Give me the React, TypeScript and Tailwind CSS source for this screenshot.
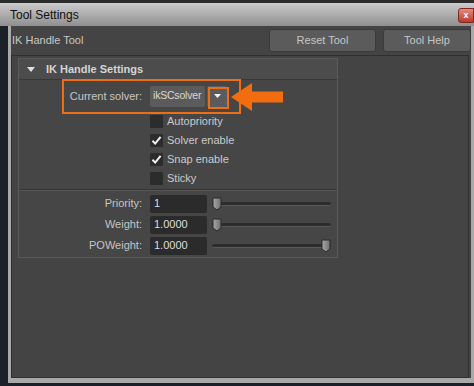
const font = "font-['Liberation_Sans',Arial,sans-serif]";

function CheckRow({ label, checked }: { label: string; checked?: boolean }) {
  return (
    <div className="flex h-[19px] items-center pl-[131px]">
      <div className="flex h-[13px] w-[13px] items-center justify-center rounded-[1px] bg-[#2c2c2c]">
        {checked && (
          <svg width="11" height="11" viewBox="0 0 11 11">
            <path d="M1.5 5.8 L4.2 8.6 L9.6 1.8" fill="none" stroke="#f2f2f2" strokeWidth="2" />
          </svg>
        )}
      </div>
      <span className="ml-[4px] text-[11px] text-[#cacaca]">{label}</span>
    </div>
  );
}

function Thumb() {
  return (
    <svg width="10" height="14" viewBox="0 0 10 14" className="shrink-0">
      <defs>
        <linearGradient id="tg" x1="0" y1="0" x2="1" y2="0">
          <stop offset="0" stopColor="#a8a8a8" />
          <stop offset="1" stopColor="#6e6e6e" />
        </linearGradient>
      </defs>
      <path d="M1 1 H9 V10 L5 13 L1 10 Z" fill="url(#tg)" stroke="#2a2a2a" strokeWidth="1" />
    </svg>
  );
}

function SliderRow({ label, value, pos }: { label: string; value: string; pos: "start" | "end" }) {
  return (
    <div className="flex h-[21px] items-center">
      <span className="w-[123px] text-right text-[11px] text-[#c4c4c4]">{label}</span>
      <div className="ml-[8px] flex h-[18px] w-[57px] items-center rounded-[2px] bg-[#2b2b2b] pl-[4px] text-[11px] text-[#dedede]">
        {value}
      </div>
      <div className="relative ml-[5px] flex h-[18px] w-[119px] items-center">
        <div className="h-[4px] flex-1 rounded-[2px] border-b border-[#5a5a5a] bg-[#2c2c2c]" />
        <div className={`absolute top-[2px] ${pos === "start" ? "left-[0px]" : "right-0"}`}>
          <Thumb />
        </div>
      </div>
    </div>
  );
}

function Panel() {
  return (
    <div className="relative flex w-[320px] flex-col border border-[#5a5a5a] bg-[#464646]">
      <div className="flex h-[21px] items-center border-b border-[#383838] bg-[#4c4c4c]">
        <svg width="8" height="5" viewBox="0 0 8 5" className="ml-[8px]">
          <path d="M0 0 H8 L4 5 Z" fill="#e0e0e0" />
        </svg>
        <span className="ml-[11px] text-[11px] font-bold text-[#d4d4d4]">IK Handle Settings</span>
      </div>

      <div className="flex h-[32px] items-center">
        <span className="w-[123px] text-right text-[11px] text-[#c6c6c6]">Current solver:</span>
        <div className="ml-[8px] flex h-[21px] w-[55px] items-center overflow-hidden whitespace-nowrap rounded-[2px] bg-[#5b5b5b] pl-[3px] text-[10.5px] tracking-[-0.2px] text-[#d8d8d8]">
          ikSCsolver
        </div>
        <div className="ml-[2px] flex h-[21px] w-[20px] items-center justify-center rounded-[2px] bg-[#5b5b5b]">
          <svg width="7" height="4" viewBox="0 0 7 4">
            <path d="M0 0 H7 L3.5 4 Z" fill="#f4f4f4" />
          </svg>
        </div>
      </div>

      <CheckRow label="Autopriority" />
      <CheckRow label="Solver enable" checked />
      <CheckRow label="Snap enable" checked />
      <CheckRow label="Sticky" />

      <div className="mt-[1px] border-t border-[#363636] border-b border-b-[#565656]" />
      <div className="flex flex-col pt-[2px] pb-[1px]">
        <SliderRow label="Priority:" value="1" pos="start" />
        <SliderRow label="Weight:" value="1.0000" pos="start" />
        <SliderRow label="POWeight:" value="1.0000" pos="end" />
      </div>

      {/* annotation overlays */}
      <div className="pointer-events-none absolute left-[43px] top-[20px] h-[35px] w-[179px] border-2 border-[#ec6e17]" />
      <div className="pointer-events-none absolute left-[189px] top-[28px] h-[22px] w-[21px] border-2 border-[#ec6e17]" />
      <svg
        width="52"
        height="28"
        viewBox="0 0 52 28"
        className="pointer-events-none absolute left-[212px] top-[24px]"
      >
        <path d="M0 14 L21 0 V8.5 H52 V19.5 H21 V28 Z" fill="#f26c10" />
      </svg>
    </div>
  );
}

export default function App() {
  return (
    <div className={`flex h-[386px] w-[474px] flex-col overflow-hidden bg-[#1c2129] ${font}`}>
      {/* title bar */}
      <div className="relative flex h-[26px] shrink-0 items-center border-t-[3px] border-[#2b2b2b] bg-[linear-gradient(to_bottom,#cbcbcb,#8f8f8f)] pl-[10px]">
        <span className="text-[12px] text-[#111]">Tool Settings</span>
        <div className="absolute right-0 top-[5px] flex h-[15px] w-[16px] items-center justify-center rounded-l-[3px] border border-[#7a2a20] bg-[linear-gradient(to_bottom,#e88a7c,#c0392b)] text-[9px] font-bold text-white">
          x
        </div>
      </div>

      <div className="flex min-h-0 flex-1 pb-[3px]">
        <div className="w-[8px] shrink-0" />
        <div className="flex flex-1 flex-col border-x-[3px] border-b-[5px] border-[#a9a9a9] bg-[#444444]">
          {/* tool header */}
          <div className="flex h-[29px] shrink-0 items-center">
            <span className="pl-[1px] text-[11px] text-[#c8c8c8]">IK Handle Tool</span>
            <div className="ml-auto flex gap-[7px]">
              <button className="h-[23px] w-[107px] rounded-[3px] border border-[#3a3a3a] bg-[#5b5b5b] text-[11px] text-[#c6c6c6]">
                Reset Tool
              </button>
              <button className="h-[23px] w-[88px] rounded-[3px] border border-[#3a3a3a] bg-[#5b5b5b] text-[11px] text-[#c6c6c6]">
                Tool Help
              </button>
            </div>
          </div>

          {/* scroll area */}
          <div className="mr-[2px] flex-1 border border-[#303030] bg-[#444444] pl-[6px] pt-[2px]">
            <Panel />
          </div>
        </div>
      </div>
    </div>
  );
}
